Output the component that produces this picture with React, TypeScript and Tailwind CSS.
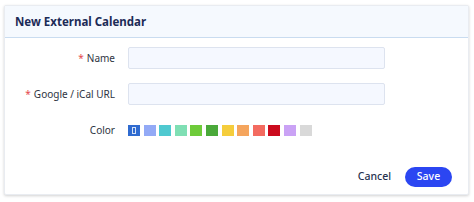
const colors = [
  "#2f6bd0",
  "#93aaf6",
  "#4fc9d0",
  "#7fdfb4",
  "#6ecb3a",
  "#4aa93a",
  "#f5cd3c",
  "#f5a55d",
  "#f36b60",
  "#cb0b1e",
  "#caa2f5",
  "#d9d9d9",
];

function Field({ label, required }: { label: string; required?: boolean }) {
  return (
    <div className="flex items-center">
      <div className="w-[110px] text-right text-[10px] text-[#2e3442]">
        {required && <span className="mr-[3px] text-[#e5484d]">*</span>}
        {label}
      </div>
      <div className="ml-[13px] h-[22px] w-[257px] rounded-[2px] border border-[#dde3ef] bg-[#f5f8ff]" />
    </div>
  );
}

export default function App() {
  return (
    <div className="h-[202px] w-[474px] bg-white p-[4px] pt-[5px] font-['Noto_Sans',sans-serif]">
      <div className="h-[190px] w-[465px] rounded-[2px] border border-[#e9ecf1] bg-white shadow-[0_1px_3px_rgba(0,0,0,0.18)]">
        <div className="flex h-[32px] items-center border-b border-[#c9dcf0] bg-[#f5f9fe] px-[10px]">
          <span className="text-[11.5px] font-bold text-[#1c2b57]">New External Calendar</span>
        </div>
        <div className="flex flex-col gap-[14px] pt-[9px]">
          <Field label="Name" required />
          <Field label="Google / iCal URL" required />
          <div className="flex h-[22px] items-center">
            <div className="w-[110px] text-right text-[10px] text-[#2e3442]">Color</div>
            <div className="ml-[13px] flex gap-[3.6px]">
              {colors.map((c, i) => (
                <div
                  key={c}
                  className="flex h-[11px] w-[12px] items-center justify-center"
                  style={{ backgroundColor: c }}
                >
                  {i === 0 && <div className="h-[7px] w-[4px] border border-white/80" />}
                </div>
              ))}
            </div>
          </div>
        </div>
        <div className="mt-[26px] flex items-center justify-end gap-[14px] pr-[16px]">
          <button className="text-[10.5px] font-medium text-[#27324f]">Cancel</button>
          <button className="h-[20px] w-[47px] rounded-full bg-[#2b46f2] text-[10.5px] font-medium text-white">
            Save
          </button>
        </div>
      </div>
    </div>
  );
}
